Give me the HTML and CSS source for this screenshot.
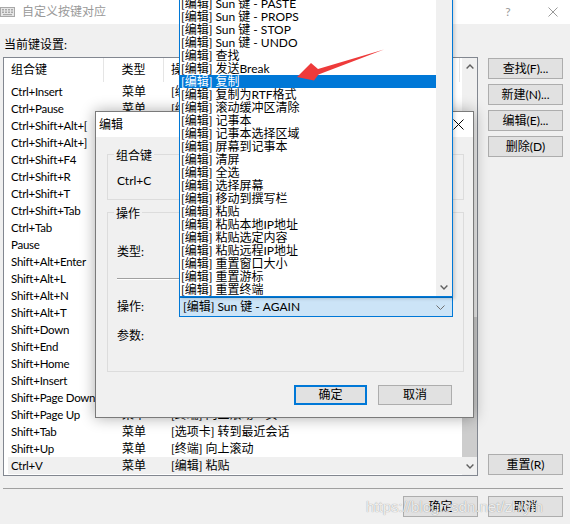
FILE: index.html
```html
<!DOCTYPE html>
<html lang="zh-CN">
<head>
<meta charset="utf-8">
<title>自定义按键对应</title>
<link rel="stylesheet" href="styles.css">
</head>
<body>
<div class="win">
  <div class="titlebar">
    <svg class="appicon" width="15" height="10" viewBox="0 0 15 10">
      <rect x="0.5" y="0.5" width="14" height="9" fill="#e6e6e6" stroke="#a8a8a8"/>
      <g fill="#a8a8a8">
        <rect x="2" y="2" width="2" height="1.5"/><rect x="5" y="2" width="2" height="1.5"/><rect x="8" y="2" width="2" height="1.5"/><rect x="11" y="2" width="2" height="1.5"/>
        <rect x="2" y="4.5" width="2" height="1.5"/><rect x="5" y="4.5" width="2" height="1.5"/><rect x="8" y="4.5" width="2" height="1.5"/><rect x="11" y="4.5" width="2" height="1.5"/>
        <rect x="3" y="7" width="9" height="1.2"/>
      </g>
    </svg>
    <span class="title">自定义按键对应</span>
    <span class="help">?</span>
    <svg class="tclose" width="10" height="10" viewBox="0 0 10 10"><path d="M0.5 0.5L9.5 9.5M9.5 0.5L0.5 9.5" stroke="#999" stroke-width="1" fill="none"/></svg>
  </div>
  <div class="caption">当前键设置:</div>
  <div class="mainrow">
    <div class="list">
      <div class="list-content">
        <div class="lhead"><div class="h1">组合键</div><div class="h2">类型</div><div class="h3">操作</div></div>
        <div class="row"><div class="c1">Ctrl+Insert</div><div class="c2">菜单</div><div class="c3">[编辑] 复制</div></div>
        <div class="row"><div class="c1">Ctrl+Pause</div><div class="c2">菜单</div><div class="c3">[编辑] 发送Break</div></div>
        <div class="row"><div class="c1">Ctrl+Shift+Alt+[</div><div class="c2">菜单</div><div class="c3">[选项卡] 上一个</div></div>
        <div class="row"><div class="c1">Ctrl+Shift+Alt+]</div><div class="c2">菜单</div><div class="c3">[选项卡] 下一个</div></div>
        <div class="row"><div class="c1">Ctrl+Shift+F4</div><div class="c2">菜单</div><div class="c3">[文件] 关闭</div></div>
        <div class="row"><div class="c1">Ctrl+Shift+R</div><div class="c2">菜单</div><div class="c3">[文件] 重新连接</div></div>
        <div class="row"><div class="c1">Ctrl+Shift+T</div><div class="c2">菜单</div><div class="c3">[文件] 复制会话</div></div>
        <div class="row"><div class="c1">Ctrl+Shift+Tab</div><div class="c2">菜单</div><div class="c3">[选项卡] 上一个</div></div>
        <div class="row"><div class="c1">Ctrl+Tab</div><div class="c2">菜单</div><div class="c3">[选项卡] 下一个</div></div>
        <div class="row"><div class="c1">Pause</div><div class="c2">菜单</div><div class="c3">[编辑] 发送Break</div></div>
        <div class="row"><div class="c1">Shift+Alt+Enter</div><div class="c2">菜单</div><div class="c3">[查看] 全屏</div></div>
        <div class="row"><div class="c1">Shift+Alt+L</div><div class="c2">菜单</div><div class="c3">[查看] 锁定</div></div>
        <div class="row"><div class="c1">Shift+Alt+N</div><div class="c2">菜单</div><div class="c3">[文件] 新建</div></div>
        <div class="row"><div class="c1">Shift+Alt+T</div><div class="c2">菜单</div><div class="c3">[查看] 总在最前</div></div>
        <div class="row"><div class="c1">Shift+Down</div><div class="c2">菜单</div><div class="c3">[终端] 向下滚动</div></div>
        <div class="row"><div class="c1">Shift+End</div><div class="c2">菜单</div><div class="c3">[终端] 滚动到底部</div></div>
        <div class="row"><div class="c1">Shift+Home</div><div class="c2">菜单</div><div class="c3">[终端] 滚动到顶部</div></div>
        <div class="row"><div class="c1">Shift+Insert</div><div class="c2">菜单</div><div class="c3">[编辑] 粘贴</div></div>
        <div class="row"><div class="c1">Shift+Page Down</div><div class="c2">菜单</div><div class="c3">[终端] 向下滚动一页</div></div>
        <div class="row"><div class="c1">Shift+Page Up</div><div class="c2">菜单</div><div class="c3">[终端] 向上滚动一页</div></div>
        <div class="row"><div class="c1">Shift+Tab</div><div class="c2">菜单</div><div class="c3">[选项卡] 转到最近会话</div></div>
        <div class="row"><div class="c1">Shift+Up</div><div class="c2">菜单</div><div class="c3">[终端] 向上滚动</div></div>
        <div class="row sel"><div class="c1">Ctrl+V</div><div class="c2">菜单</div><div class="c3">[编辑] 粘贴</div></div>
      </div>
      <div class="vscroll">
        <div class="sb-btn"><svg width="8" height="5" viewBox="0 0 8 5"><path d="M0.6 4.4L4 1L7.4 4.4" fill="none" stroke="#606060" stroke-width="1.4"/></svg></div>
        <div class="track"><div class="thumb"></div></div>
        <div class="sb-btn"><svg width="8" height="5" viewBox="0 0 8 5"><path d="M0.6 0.6L4 4L7.4 0.6" fill="none" stroke="#606060" stroke-width="1.4"/></svg></div>
      </div>
    </div>
    <div class="sidebtns">
      <button class="btn">查找(F)...</button>
      <button class="btn">新建(N)...</button>
      <button class="btn">编辑(E)...</button>
      <button class="btn">删除(D)</button>
      <button class="btn reset">重置(R)</button>
    </div>
  </div>
  <div class="sep"></div>
  <div class="footer">
    <button class="btn fbtn">确定</button>
    <button class="btn fbtn">取消</button>
  </div>
</div>

<div class="dialog">
  <div class="dtitle">
    <span>编辑</span>
    <svg class="dclose" width="11" height="11" viewBox="0 0 11 11"><path d="M0.5 0.5L10.5 10.5M10.5 0.5L0.5 10.5" stroke="#000" stroke-width="1" fill="none"/></svg>
  </div>
  <div class="dbody">
    <div class="group g1">
      <div class="gtitle">组合键</div>
      <div class="keyval">Ctrl+C</div>
    </div>
    <div class="group g2">
      <div class="gtitle">操作</div>
      <div class="frow frow1"><span class="flabel">类型:</span><div class="combo plain"></div></div>
      <div class="hr"></div>
      <div class="frow frow2"><span class="flabel">操作:</span>
        <div class="combo active"><span class="ctext">[编辑] Sun 键 - AGAIN</span>
          <svg class="cchev" width="9" height="5" viewBox="0 0 9 5"><path d="M0.5 0.5L4.5 4.5L8.5 0.5" fill="none" stroke="#707070" stroke-width="1"/></svg>
        </div>
      </div>
      <div class="frow frow3"><span class="flabel">参数:</span></div>
    </div>
    <div class="dbtns">
      <button class="btn dbtn ok">确定</button>
      <button class="btn dbtn cancel">取消</button>
    </div>
  </div>
</div>

<div class="dropdown">
  <div class="ditems">
    <div class="ditem">[编辑] Sun 键 - PASTE</div>
    <div class="ditem">[编辑] Sun 键 - PROPS</div>
    <div class="ditem">[编辑] Sun 键 - STOP</div>
    <div class="ditem">[编辑] Sun 键 - UNDO</div>
    <div class="ditem">[编辑] 查找</div>
    <div class="ditem">[编辑] 发送Break</div>
    <div class="ditem sel">[编辑] 复制</div>
    <div class="ditem">[编辑] 复制为RTF格式</div>
    <div class="ditem">[编辑] 滚动缓冲区清除</div>
    <div class="ditem">[编辑] 记事本</div>
    <div class="ditem">[编辑] 记事本选择区域</div>
    <div class="ditem">[编辑] 屏幕到记事本</div>
    <div class="ditem">[编辑] 清屏</div>
    <div class="ditem">[编辑] 全选</div>
    <div class="ditem">[编辑] 选择屏幕</div>
    <div class="ditem">[编辑] 移动到撰写栏</div>
    <div class="ditem">[编辑] 粘贴</div>
    <div class="ditem">[编辑] 粘贴本地IP地址</div>
    <div class="ditem">[编辑] 粘贴选定内容</div>
    <div class="ditem">[编辑] 粘贴远程IP地址</div>
    <div class="ditem">[编辑] 重置窗口大小</div>
    <div class="ditem">[编辑] 重置游标</div>
    <div class="ditem">[编辑] 重置终端</div>
  </div>
  <div class="dscroll">
    <div class="sb-btn"><svg width="8" height="5" viewBox="0 0 8 5"><path d="M0.6 0.6L4 4L7.4 0.6" fill="none" stroke="#606060" stroke-width="1.4"/></svg></div>
  </div>
</div>

<svg class="arrow" width="100" height="40" viewBox="290 45 100 40">
  <polygon points="384,49.5 318,69 311,63 297,77 314,80.5 318.5,74.5" fill="#ee3b3b"/>
</svg>

<div class="watermark">https://blog.csdn.net/zhiyin</div>
</body>
</html>
```

FILE: styles.css
```css
html, body {
  margin: 0;
  padding: 0;
}
body {
  width: 570px;
  height: 524px;
  overflow: hidden;
  position: relative;
  background: #f0f0f0;
  font-family: "Lato", "Noto Sans CJK SC", sans-serif;
  font-size: 12px;
  line-height: 16px;
  color: #000;
}
button {
  font: inherit;
  color: inherit;
}

/* main window */
.titlebar {
  height: 24px;
  background: #fff;
  display: flex;
  align-items: center;
}
.appicon { display: block; }
.title {
  margin-left: 7px;
  color: #999;
}
.help {
  margin-left: auto;
  width: 20px;
  text-align: center;
  color: #999;
}
.tclose {
  display: block;
  margin-left: 30px;
  margin-right: 12px;
}
.caption {
  padding: 13px 0 0 4px;
  margin-bottom: 4px;
  line-height: 16px;
}
.mainrow {
  display: flex;
  gap: 10px;
  padding-left: 3px;
  height: 419px;
}
.list {
  width: 475px;
  box-sizing: border-box;
  border: 1px solid #828790;
  background: #fff;
  display: flex;
}
.list-content {
  flex: 1;
  padding-left: 4px;
  overflow: hidden;
}
.lhead, .row {
  display: grid;
  grid-template-columns: 96px 60px 1fr;
  white-space: nowrap;
}
.lhead {
  height: 25px;
  align-items: stretch;
}
.lhead > div {
  display: flex;
  align-items: center;
  border-right: 1px solid #e5e5e5;
  margin-bottom: 1px;
}
.lhead .h1 { padding-left: 3px; }
.lhead .h2 { justify-content: center; }
.lhead .h3 { padding-left: 7px; margin-right: 2px; }
.row {
  height: 17px;
  line-height: 17px;
}
.row > div { overflow: hidden; }
.row .c1 {
  padding-left: 3px;
  font-size: 11.5px;
  letter-spacing: -0.25px;
  overflow: visible;
}
.row .c2 { text-align: center; }
.row .c3 { padding-left: 7px; }
.row.sel { background: #f0f0f0; }

.vscroll {
  width: 15px;
  background: #f0f0f0;
  display: flex;
  flex-direction: column;
}
.sb-btn {
  height: 17px;
  display: flex;
  align-items: center;
  justify-content: center;
}
.sb-btn svg { display: block; }
.track { flex: 1; }
.thumb {
  margin-top: 242px;
  height: 140px;
  background: #cdcdcd;
}

.sidebtns {
  width: 75px;
  display: flex;
  flex-direction: column;
  gap: 5px;
  padding: 1px 0;
  box-sizing: border-box;
}
.btn {
  height: 21px;
  box-sizing: border-box;
  border: 1px solid #adadad;
  background: #e1e1e1;
  padding: 0;
  margin: 0;
  display: flex;
  align-items: center;
  justify-content: center;
  line-height: 16px;
}
.sidebtns .reset { margin-top: auto; }

.sep {
  margin: 12px 7px 0 3px;
  height: 1px;
  background: #a0a0a0;
}
.footer {
  display: flex;
  justify-content: flex-end;
  gap: 10px;
  margin-top: 7px;
  padding-right: 7px;
}
.fbtn { width: 75px; }

/* edit dialog */
.dialog {
  position: absolute;
  left: 95px;
  top: 111px;
  width: 379px;
  height: 307px;
  box-sizing: border-box;
  border: 1px solid #7a7a7a;
  background: #f0f0f0;
  box-shadow: 0 0 14px rgba(0, 0, 0, 0.33);
}
.dtitle {
  height: 25px;
  background: #fff;
  display: flex;
  align-items: center;
  padding-left: 3px;
}
.dclose {
  display: block;
  margin-left: auto;
  margin-right: 9px;
}
.dbody {
  padding: 17px 9px 0 11px;
}
.group {
  border: 1px solid #dcdcdc;
  box-sizing: border-box;
}
.g1 { height: 46px; }
.g2 { height: 160px; margin-top: 12px; }
.gtitle {
  width: max-content;
  margin: -7px 0 0 6px;
  padding: 0 2px;
  background: #f0f0f0;
  line-height: 16px;
}
.keyval {
  margin-top: 9px;
  padding-left: 9px;
  line-height: 16px;
}
.frow {
  display: flex;
  align-items: center;
  padding: 0 10px 0 9px;
}
.flabel { width: 62px; flex: none; }
.frow1 { margin-top: 19px; height: 21px; }
.hr {
  margin: 16px 10px 0 9px;
  border-top: 1px solid #a0a0a0;
  border-bottom: 1px solid #fff;
}
.frow2 { margin-top: 17px; height: 20px; }
.frow3 { margin-top: 11px; height: 16px; }
.combo {
  flex: 1;
  height: 20px;
  box-sizing: border-box;
  display: flex;
  align-items: center;
}
.combo.plain {
  border: 1px solid #adadad;
  background: #e1e1e1;
}
.combo.active {
  border: 1px solid #0078d7;
  background: #cce4f7;
  padding-left: 3px;
}
.ctext { white-space: nowrap; }
.cchev {
  display: block;
  margin-left: auto;
  margin-right: 7px;
}
.dbtns {
  display: flex;
  justify-content: flex-end;
  gap: 11px;
  margin-top: 13px;
  padding-right: 12px;
}
.dbtn { height: 20px; }
.dbtn.ok {
  width: 73px;
  border: 2px solid #0078d7;
}
.dbtn.cancel { width: 74px; }

/* dropdown list */
.dropdown {
  position: absolute;
  left: 179px;
  top: -4px;
  width: 274px;
  height: 301px;
  box-sizing: border-box;
  border: 1px solid #0078d7;
  background: #fff;
  display: flex;
  box-shadow: 2px 2px 3px rgba(0, 0, 0, 0.15);
}
.ditems {
  flex: 1;
  overflow: hidden;
}
.ditem {
  height: 13px;
  line-height: 13px;
  padding-left: 1px;
  white-space: nowrap;
}
.ditem.sel {
  background: #0078d7;
  color: #fff;
}
.dscroll {
  width: 16px;
  background: #f0f0f0;
  display: flex;
  flex-direction: column;
  justify-content: flex-end;
}

/* annotation overlays */
.arrow {
  position: absolute;
  left: 290px;
  top: 45px;
}
.watermark {
  position: absolute;
  left: 366px;
  top: 498px;
  font-family: "Liberation Sans", sans-serif;
  font-size: 15px;
  line-height: 18px;
  color: rgba(255, 255, 255, 0.85);
  text-shadow: 0 0 1px rgba(0, 0, 0, 0.45);
  white-space: nowrap;
}
```
